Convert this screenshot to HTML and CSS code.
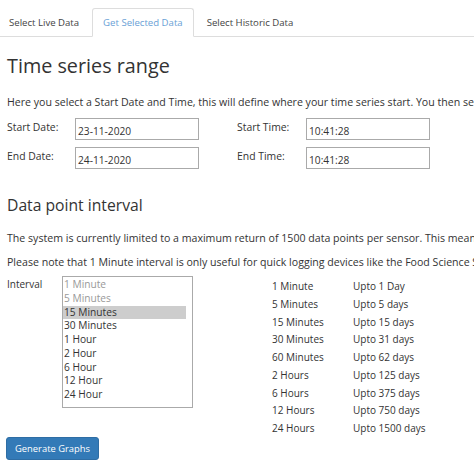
FILE: index.html
```html
<!DOCTYPE html>
<html lang="en">
<head>
  <meta charset="UTF-8">
  <title>Get Selected Data</title>
  <link rel="stylesheet" href="styles.css">
</head>
<body>

  <ul class="nav-tabs">
    <li class="tab">Select Live Data</li>
    <li class="tab active">Get Selected Data</li>
    <li class="tab">Select Historic Data</li>
  </ul>

  <div class="content">
    <h2 class="baslik">Time series range</h2>
    <p class="aciklama">Here you select a Start Date and Time, this will define where your time series start. You then select an End Date and Time, this will define where your time series end.</p>

    <div class="tarih-grid">
      <label>Start Date:</label>
      <input type="text" class="kutu" value="23-11-2020">
      <label>Start Time:</label>
      <input type="text" class="kutu" value="10:41:28">
      <label>End Date:</label>
      <input type="text" class="kutu" value="24-11-2020">
      <label>End Time:</label>
      <input type="text" class="kutu" value="10:41:28">
    </div>

    <h3 class="alt-baslik">Data point interval</h3>
    <p class="aciklama">The system is currently limited to a maximum return of 1500 data points per sensor. This means the longer your time range, the larger the interval must be.</p>
    <p class="aciklama">Please note that 1 Minute interval is only useful for quick logging devices like the Food Science Sensors.</p>

    <div class="aralik">
      <div class="aralik-sol">
        <label class="aralik-label">Interval</label>
        <div class="liste">
          <div class="secenek pasif">1 Minute</div>
          <div class="secenek pasif">5 Minutes</div>
          <div class="secenek secili">15 Minutes</div>
          <div class="secenek">30 Minutes</div>
          <div class="secenek">1 Hour</div>
          <div class="secenek">2 Hour</div>
          <div class="secenek">6 Hour</div>
          <div class="secenek">12 Hour</div>
          <div class="secenek">24 Hour</div>
        </div>
      </div>

      <table class="limit-tablo">
        <tr><td>1 Minute</td><td>Upto 1 Day</td></tr>
        <tr><td>5 Minutes</td><td>Upto 5 days</td></tr>
        <tr><td>15 Minutes</td><td>Upto 15 days</td></tr>
        <tr><td>30 Minutes</td><td>Upto 31 days</td></tr>
        <tr><td>60 Minutes</td><td>Upto 62 days</td></tr>
        <tr><td>2 Hours</td><td>Upto 125 days</td></tr>
        <tr><td>6 Hours</td><td>Upto 375 days</td></tr>
        <tr><td>12 Hours</td><td>Upto 750 days</td></tr>
        <tr><td>24 Hours</td><td>Upto 1500 days</td></tr>
      </table>
    </div>

    <button class="grafik-btn">Generate Graphs</button>
  </div>

</body>
</html>
```

FILE: styles.css
```css
body {
  margin: 0;
  font-family: "Open Sans", Arial, sans-serif;
  font-size: 10px;
  color: #333;
  background: #fff;
  overflow: hidden;
}

.nav-tabs {
  list-style: none;
  margin: 0 0 0 -2px;
  padding: 8px 0 0 0;
  display: flex;
  border-bottom: 1px solid #ddd;
}

.tab {
  font-size: 9.6px;
  padding: 6px 10px 5px 10px;
  line-height: 16px;
  margin-right: 2px;
  margin-bottom: -1px;
  border: 1px solid transparent;
  border-radius: 3px 3px 0 0;
  color: #444;
}

.tab.active {
  color: #6a9fd6;
  border-color: #ddd;
  border-bottom-color: #fff;
  background: #fff;
}

.content {
  padding: 0 7px;
  white-space: nowrap;
}

.baslik {
  font-size: 19.8px;
  font-weight: normal;
  margin: 15px 0 0 0;
  line-height: 28px;
}

.aciklama {
  font-size: 10.6px;
  margin: 0;
  line-height: 16px;
}

.baslik + .aciklama {
  margin-top: 14px;
}

.tarih-grid {
  display: grid;
  grid-template-columns: 68px 124px 38px 69px 124px;
  row-gap: 7px;
  align-items: start;
  margin-top: 8px;
}

.tarih-grid label {
  font-size: 10.4px;
  padding-top: 2px;
}

.tarih-grid label:nth-child(3),
.tarih-grid label:nth-child(7) {
  grid-column: 4;
}

.kutu {
  font-family: "Open Sans", Arial, sans-serif;
  font-size: 10.2px;
  color: #333;
  width: 124px;
  height: 22px;
  box-sizing: border-box;
  border: 1px solid #aaa;
  padding: 3px 2px 0 2px;
  margin: 0;
}

.alt-baslik {
  font-size: 15.7px;
  font-weight: normal;
  margin: 25px 0 0 0;
  line-height: 22px;
}

.alt-baslik + .aciklama {
  margin-top: 14px;
}

.aciklama + .aciklama {
  margin-top: 8px;
}

.aralik {
  display: flex;
  align-items: flex-start;
  margin-top: 6px;
}

.aralik-sol {
  display: flex;
  width: 265px;
}

.aralik-label {
  width: 55px;
  padding-top: 1px;
}

.liste {
  width: 131px;
  height: 132px;
  box-sizing: border-box;
  border: 1px solid #aaa;
  padding-top: 1px;
}

.secenek {
  width: 122px;
  line-height: 13.75px;
  font-size: 10.2px;
  padding-left: 1px;
}

.secenek.pasif {
  color: #999;
}

.secenek.secili {
  background: #cdcdcd;
}

.limit-tablo {
  border-collapse: collapse;
  margin-top: 2px;
}

.limit-tablo td {
  padding: 0;
  height: 17.75px;
  line-height: 16px;
  vertical-align: top;
}

.limit-tablo td:first-child {
  width: 81px;
}

.grafik-btn {
  display: block;
  margin: -1px 0 0 -1px;
  font-family: "Open Sans", Arial, sans-serif;
  font-size: 9.4px;
  color: #fff;
  background: #337ab7;
  border: 1px solid #2e6da4;
  border-radius: 3px;
  padding: 3px 8px;
  line-height: 15px;
  cursor: pointer;
}
```
